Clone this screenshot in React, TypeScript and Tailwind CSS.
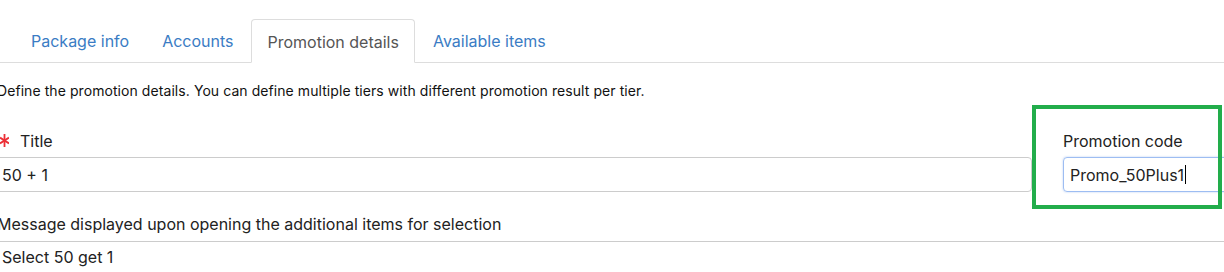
const tabs = ["Package info", "Accounts", "Promotion details", "Available items"];

function Tabs({ active }: { active: string }) {
    return (
        <div className="flex items-end h-[63px] pl-[19px] border-b border-[#dddddd] text-[16px]">
            {tabs.map((t) =>
                t === active ? (
                    <div
                        key={t}
                        className="ml-[3px] -mb-px h-[44px] px-[15px] pt-[2px] flex items-center bg-white border border-[#dddddd] border-b-white rounded-t-[4px] text-[#555555]"
                    >
                        {t}
                    </div>
                ) : (
                    <div key={t} className="ml-[3px] h-[44px] px-[15px] pt-[2px] flex items-center text-[#3a7cc4]">
                        {t}
                    </div>
                )
            )}
        </div>
    );
}

function RequiredMark() {
    return (
        <svg width="9" height="13" viewBox="0 0 9 13" className="mr-[11px] -mt-[2px]">
            <g stroke="#ec2f36" strokeWidth="1.8">
                <line x1="4.5" y1="0" x2="4.5" y2="13" />
                <line x1="0" y1="3.6" x2="9" y2="9.4" />
                <line x1="0" y1="9.4" x2="9" y2="3.6" />
            </g>
        </svg>
    );
}

export default function App() {
    return (
        <div className="relative w-[1224px] h-[272px] overflow-hidden bg-white" style={{ fontFamily: "Inter, 'Liberation Sans', sans-serif" }}>
            <div className="-ml-[6px] w-[1260px] text-[16px] text-[#222222]">
                <Tabs active="Promotion details" />

                {/* Intro */}
                <p className="mt-[19px] pl-[3px] text-[14px] leading-[18px] tracking-[0.07px] text-[#111111]">
                    Define the promotion details. You can define multiple tiers with different promotion result per tier.
                </p>

                {/* Title + promotion code */}
                <div className="mt-[31px] flex">
                    <div className="w-[1038px]">
                        <div className="flex items-center h-[20px] pl-[6px]">
                            <RequiredMark />
                            <span>Title</span>
                        </div>
                        <div className="mt-[6px] h-[35px] border border-[#cccccc] rounded-[4px] flex items-center pl-[7px]">
                            50 + 1
                        </div>
                    </div>
                    <div className="ml-[31px] flex-1">
                        <div className="h-[20px] flex items-center">Promotion code</div>
                        <div className="mt-[6px] h-[35px] border border-[#9dbdf2] rounded-[4px] flex items-center pl-[6px] shadow-[0_0_2px_rgba(100,150,230,0.5)]">
                            Promo_50Plus1
                            <span className="ml-px inline-block w-px h-[19px] bg-black" />
                        </div>
                    </div>
                </div>

                {/* Message */}
                <div className="mt-[22px] h-[20px] flex items-center pl-[3px]">
                    Message displayed upon opening the additional items for selection
                </div>
                <div className="mt-[7px] h-[35px] border border-[#cccccc] rounded-[4px] pl-[7px] pt-[3px]">
                    Select 50 get 1
                </div>
            </div>

            {/* highlight annotation */}
            <div className="absolute left-[1032px] top-[105px] w-[190px] h-[104px] border-[4px] border-[#22ad4b]" />
        </div>
    );
}
